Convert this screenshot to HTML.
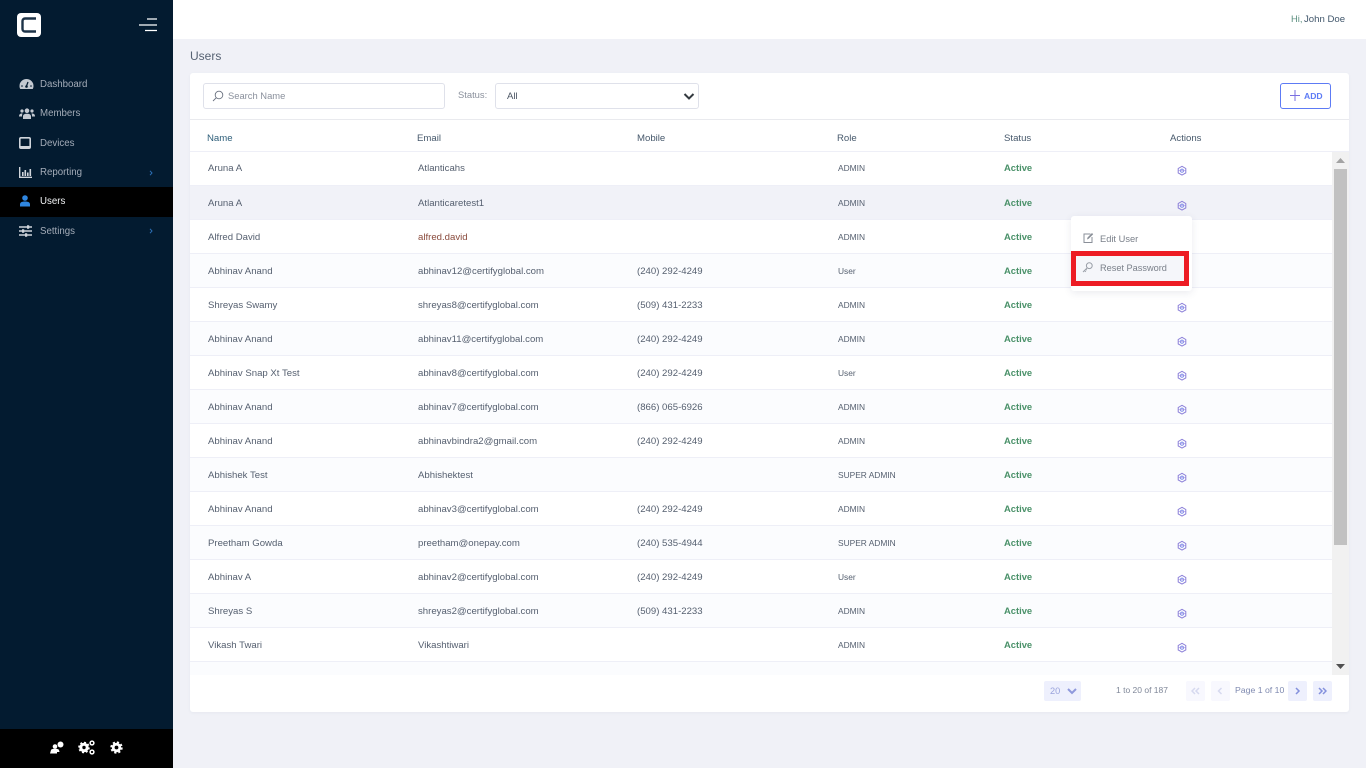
<!DOCTYPE html>
<html lang="en"><head><meta charset="utf-8"><title>Users</title>
<style>
*{box-sizing:border-box}
html,body{margin:0;padding:0;width:1366px;height:768px;overflow:hidden;background:#f0f1f7;font-family:"Liberation Sans",sans-serif;font-size:9.6px;color:#4a5568}
.a{position:absolute;white-space:nowrap}
#side{position:absolute;left:0;top:0;width:173px;height:768px;background:#031b30}
#side .t{position:absolute;left:40px;font-size:9.7px;line-height:14px;color:#a4acb8}
#side svg{position:absolute}
.r{position:absolute;left:190px;width:1142px;height:34px;border-bottom:1px solid #eeeff7}
.r.o{background:#fbfcfe}
.r span{position:absolute;top:0;line-height:35px;white-space:nowrap;color:#566070}
.n{left:18px}.e{left:228px}.m{left:447px}.l{left:648px;font-size:8.4px}
.r .s{left:814px;font-weight:bold;color:#4a9169;font-size:9.4px;line-height:33px}
.r svg{position:absolute;left:987px;top:14px}
.th{position:absolute;top:132px;line-height:14px;font-size:9.6px;color:#47596c}
.b{position:absolute;top:681px;width:19px;height:20px;border-radius:2px;background:#eef0fd}
.b svg{position:absolute;left:5px;top:6px}
</style></head><body>
<svg width="0" height="0" style="position:absolute"><defs>
<g id="g"><path d="M5 .8 8.800 3v4.400L5 9.600 1.200 7.400V3z" fill="none" stroke="#8b7fd8" stroke-width="1"/><circle cx="5" cy="5.200" r="1.600" fill="none" stroke="#7d8bea" stroke-width="1"/><path d="M1.500 5.200h7" stroke="#a79be6" stroke-width=".7"/></g>
</defs></svg>

<div class="a" style="left:173px;top:0;width:1193px;height:39px;background:#fff"></div>
<div class="a" style="left:1291px;top:12px;line-height:14px;font-size:9.400px;color:#5d9080">Hi,</div>
<div class="a" style="left:1304px;top:12px;line-height:15px;font-size:9.600px;color:#40566b">John Doe</div>

<div id="side">
<svg style="left:17px;top:13px" width="24" height="24" viewBox="0 0 24 24"><rect width="24" height="24" rx="4" fill="#fff"/><path d="M19 5.500H8A2.500 2.500 0 0 0 5.500 8v8A2.500 2.500 0 0 0 8 18.500h11" fill="none" stroke="#1d3348" stroke-width="2.400"/></svg>
<svg style="left:139px;top:18px" width="18" height="14" viewBox="0 0 18 14"><path d="M8 1h10M0 7h18M6 12.500h12" stroke="#fff" stroke-width="1.300"/></svg>

<svg style="left:19px;top:78px" width="15" height="12" viewBox="0 0 15 12"><path d="M7.500 1A7 7 0 0 0 .5 8c0 1.300.3 2.300.8 3h12.400c.5-.7.800-1.700.800-3a7 7 0 0 0-7-7z" fill="#c3c9d1"/><path d="M7.500 8 9 4" stroke="#031b30" stroke-width="1.300"/><circle cx="7.500" cy="8.500" r="1.300" fill="#031b30"/><circle cx="3" cy="8" r=".8" fill="#031b30"/><circle cx="12" cy="8" r=".8" fill="#031b30"/></svg>
<div class="t" style="top:78px">Dashboard</div>
<svg style="left:19px;top:108px" width="16" height="11" viewBox="0 0 16 11"><g fill="#c3c9d1"><circle cx="8" cy="2.700" r="2.300"/><circle cx="3" cy="3" r="1.600"/><circle cx="13" cy="3" r="1.600"/><path d="M4 11V8.500C4 6.500 5.500 5.700 8 5.700s4 .8 4 2.800V11zM0 8.500C0 6.500 1 5.500 3 5.500l.6.100C3 6.300 3 7.500 3 8.500zM16 8.500c0-2-1-3-3-3l-.6.100c.6.700.6 1.900.6 2.900z"/></g></svg>
<div class="t" style="top:107px">Members</div>
<svg style="left:19px;top:137px" width="12" height="12" viewBox="0 0 12 12"><rect x=".8" y=".8" width="10.400" height="10.400" rx="1.200" fill="none" stroke="#d0d5db" stroke-width="1.600"/><rect x="1" y="9" width="10" height="2.300" fill="#d0d5db"/></svg>
<div class="t" style="top:137px">Devices</div>
<svg style="left:19px;top:167px" width="13" height="11" viewBox="0 0 13 11"><path d="M.7 0v10.300H13" fill="none" stroke="#d0d5db" stroke-width="1.400"/><path d="M3 5h1.600v4H3zM5.500 3h1.600v6H5.500zM8 5.500h1.600V9H8zM10.500 2h1.600v7h-1.600z" fill="#d0d5db"/></svg>
<div class="t" style="top:166px">Reporting</div>
<svg style="left:149px;top:170px" width="4" height="6" viewBox="0 0 4 6"><path d="M1 .8 3 3 1 5.200" fill="none" stroke="#2c6fb5" stroke-width="1"/></svg>
<div class="a" style="left:0;top:187px;width:173px;height:30px;background:#000"></div>
<svg style="left:20px;top:195px" width="10" height="12" viewBox="0 0 10 12"><circle cx="5" cy="3" r="2.800" fill="#2f86e0"/><path d="M0 11.500V9.500C0 7.500 1.500 6.500 5 6.500s5 1 5 3v2z" fill="#2f86e0"/></svg>
<div class="t" style="top:195px;color:#f2f4f6">Users</div>
<svg style="left:19px;top:225px" width="13" height="12" viewBox="0 0 13 12"><path d="M0 2h13M0 6h13M0 10h13" stroke="#d0d5db" stroke-width="1.500"/><path d="M8 .3h2.200v3.400H8zM3 4.300h2.200v3.400H3zM6 8.300h2.200v3.400H6z" fill="#d0d5db"/></svg>
<div class="t" style="top:225px">Settings</div>
<svg style="left:149px;top:228px" width="4" height="6" viewBox="0 0 4 6"><path d="M1 .8 3 3 1 5.200" fill="none" stroke="#2c6fb5" stroke-width="1"/></svg>

<div class="a" style="left:0;top:729px;width:173px;height:39px;background:#000"></div>
<svg style="left:50px;top:741px" width="14" height="13" viewBox="0 0 14 13"><g fill="#fff"><circle cx="10.500" cy="3.500" r="3"/><circle cx="5" cy="5.500" r="2.300"/><path d="M0 12.500 1 9c.4-.8 1.500-1.300 4-1.300S8.600 8.200 9 9l.5 2H7v1.500z"/></g></svg>
<svg style="left:78px;top:740px" width="17" height="15" viewBox="0 0 17 15"><g fill="none" stroke="#fff"><circle cx="6" cy="7.500" r="3.200" stroke-width="3"/><circle cx="6" cy="7.500" r="5" stroke-width="1.600" stroke-dasharray="2 1.900"/><circle cx="14" cy="3" r="1.900" stroke-width="1.500"/><circle cx="14" cy="12" r="1.900" stroke-width="1.500"/></g></svg>
<svg style="left:110px;top:741px" width="13" height="13" viewBox="0 0 13 13"><g fill="none" stroke="#fff"><circle cx="6.500" cy="6.500" r="3.300" stroke-width="2.800"/><circle cx="6.500" cy="6.500" r="5.300" stroke-width="1.800" stroke-dasharray="2.200 2"/></g></svg>
</div>

<div class="a" style="left:190px;top:49px;line-height:14px;font-size:12px;color:#566273">Users</div>

<div class="a" style="left:190px;top:73px;width:1159px;height:639px;background:#fff;border-radius:3px;box-shadow:0 1px 3px rgba(40,50,90,.05)"></div>
<div class="a" style="left:190px;top:119px;width:1159px;height:1px;background:#e9eaee"></div>

<div class="a" style="left:203px;top:83px;width:242px;height:26px;border:1px solid #dfe1ea;border-radius:3px;background:#fff"></div>
<svg class="a" style="left:212px;top:90px" width="12" height="12" viewBox="0 0 12 12"><circle cx="7" cy="5" r="3.800" fill="none" stroke="#6b7280" stroke-width=".9"/><path d="M4.200 7.800 1 11" stroke="#6b7280" stroke-width=".9"/></svg>
<div class="a" style="left:228px;top:89px;line-height:14px;font-size:9.400px;color:#8a909c">Search Name</div>
<div class="a" style="left:458px;top:88px;line-height:14px;font-size:9.400px;color:#8a909c">Status:</div>
<div class="a" style="left:495px;top:83px;width:204px;height:26px;border:1px solid #dfe1ea;border-radius:3px;background:#fff"></div>
<div class="a" style="left:507px;top:90px;line-height:14px;font-size:9.600px;color:#4b5563">All</div>
<svg class="a" style="left:683px;top:93px" width="12" height="7" viewBox="0 0 12 7"><path d="M1.500 1 6 5.500 10.500 1" fill="none" stroke="#343a40" stroke-width="2"/></svg>
<div class="a" style="left:1280px;top:83px;width:51px;height:26px;border:1.300px solid #5d7bf5;border-radius:3px;background:#fff"></div>
<svg class="a" style="left:1290px;top:90px" width="10" height="11" viewBox="0 0 10 11"><path d="M5 0v11M0 5.500h10" stroke="#7a6fe0" stroke-width="1"/></svg>
<div class="a" style="left:1304px;top:89px;line-height:14px;font-size:8.600px;font-weight:bold;color:#5d7bf5">ADD</div>

<div class="th" style="left:207px;color:#2f5f7a">Name</div>
<div class="th" style="left:417px">Email</div>
<div class="th" style="left:637px">Mobile</div>
<div class="th" style="left:837px">Role</div>
<div class="th" style="left:1004px">Status</div>
<div class="th" style="left:1170px">Actions</div>
<div class="a" style="left:190px;top:151px;width:1159px;height:1px;background:#eeeff7"></div>

<div class="r" style="top:151px;height:35px"><span class="n">Aruna A</span><span class="e">Atlanticahs</span><span class="l">ADMIN</span><span class="s">Active</span><svg width="10" height="11" viewBox="0 0 10 10"><use href="#g"/></svg></div>
<div class="r" style="top:186px;background:#f1f2f8"><span class="n">Aruna A</span><span class="e">Atlanticaretest1</span><span class="l">ADMIN</span><span class="s">Active</span><svg width="10" height="11" viewBox="0 0 10 10"><use href="#g"/></svg></div>
<div class="r" style="top:220px"><span class="n">Alfred David</span><span class="e" style="color:#8a4b3d">alfred.david</span><span class="l">ADMIN</span><span class="s">Active</span></div>
<div class="r o" style="top:254px"><span class="n">Abhinav Anand</span><span class="e">abhinav12@certifyglobal.com</span><span class="m">(240) 292-4249</span><span class="l">User</span><span class="s">Active</span></div>
<div class="r" style="top:288px"><span class="n">Shreyas Swamy</span><span class="e">shreyas8@certifyglobal.com</span><span class="m">(509) 431-2233</span><span class="l">ADMIN</span><span class="s">Active</span><svg width="10" height="11" viewBox="0 0 10 10"><use href="#g"/></svg></div>
<div class="r o" style="top:322px"><span class="n">Abhinav Anand</span><span class="e">abhinav11@certifyglobal.com</span><span class="m">(240) 292-4249</span><span class="l">ADMIN</span><span class="s">Active</span><svg width="10" height="11" viewBox="0 0 10 10"><use href="#g"/></svg></div>
<div class="r" style="top:356px"><span class="n">Abhinav Snap Xt Test</span><span class="e">abhinav8@certifyglobal.com</span><span class="m">(240) 292-4249</span><span class="l">User</span><span class="s">Active</span><svg width="10" height="11" viewBox="0 0 10 10"><use href="#g"/></svg></div>
<div class="r o" style="top:390px"><span class="n">Abhinav Anand</span><span class="e">abhinav7@certifyglobal.com</span><span class="m">(866) 065-6926</span><span class="l">ADMIN</span><span class="s">Active</span><svg width="10" height="11" viewBox="0 0 10 10"><use href="#g"/></svg></div>
<div class="r" style="top:424px"><span class="n">Abhinav Anand</span><span class="e">abhinavbindra2@gmail.com</span><span class="m">(240) 292-4249</span><span class="l">ADMIN</span><span class="s">Active</span><svg width="10" height="11" viewBox="0 0 10 10"><use href="#g"/></svg></div>
<div class="r o" style="top:458px"><span class="n">Abhishek Test</span><span class="e">Abhishektest</span><span class="l">SUPER ADMIN</span><span class="s">Active</span><svg width="10" height="11" viewBox="0 0 10 10"><use href="#g"/></svg></div>
<div class="r" style="top:492px"><span class="n">Abhinav Anand</span><span class="e">abhinav3@certifyglobal.com</span><span class="m">(240) 292-4249</span><span class="l">ADMIN</span><span class="s">Active</span><svg width="10" height="11" viewBox="0 0 10 10"><use href="#g"/></svg></div>
<div class="r o" style="top:526px"><span class="n">Preetham Gowda</span><span class="e">preetham@onepay.com</span><span class="m">(240) 535-4944</span><span class="l">SUPER ADMIN</span><span class="s">Active</span><svg width="10" height="11" viewBox="0 0 10 10"><use href="#g"/></svg></div>
<div class="r" style="top:560px"><span class="n">Abhinav A</span><span class="e">abhinav2@certifyglobal.com</span><span class="m">(240) 292-4249</span><span class="l">User</span><span class="s">Active</span><svg width="10" height="11" viewBox="0 0 10 10"><use href="#g"/></svg></div>
<div class="r o" style="top:594px"><span class="n">Shreyas S</span><span class="e">shreyas2@certifyglobal.com</span><span class="m">(509) 431-2233</span><span class="l">ADMIN</span><span class="s">Active</span><svg width="10" height="11" viewBox="0 0 10 10"><use href="#g"/></svg></div>
<div class="r" style="top:628px"><span class="n">Vikash Twari</span><span class="e">Vikashtiwari</span><span class="l">ADMIN</span><span class="s">Active</span><svg width="10" height="11" viewBox="0 0 10 10"><use href="#g"/></svg></div>
<div class="a" style="left:190px;top:662px;width:1142px;height:13px;background:#fbfcfe"></div>

<div class="a" style="left:1332px;top:152px;width:17px;height:523px;background:#f1f1f1"></div>
<div class="a" style="left:1334px;top:169px;width:13px;height:376px;background:#c1c1c1"></div>
<svg class="a" style="left:1336px;top:158px" width="9" height="5" viewBox="0 0 9 5"><path d="M4.500 0 9 5H0z" fill="#a3a3a3"/></svg>
<svg class="a" style="left:1336px;top:664px" width="9" height="5" viewBox="0 0 9 5"><path d="M0 0h9L4.500 5z" fill="#505050"/></svg>

<div class="a" style="left:1071px;top:216px;width:121px;height:75px;background:#fff;border-radius:3px;box-shadow:0 2px 8px rgba(50,60,100,.1)"></div>
<svg class="a" style="left:1083px;top:232px" width="11" height="11" viewBox="0 0 11 11"><path d="M7.500 2H1v8.500h8V5" fill="none" stroke="#8a8f98" stroke-width="1"/><path d="M4 7.500 4.500 5.500 9 1l1.200 1.200-4.500 4.500z" fill="#8a8f98"/></svg>
<div class="a" style="left:1100px;top:232px;line-height:14px;font-size:9.300px;color:#7a808a">Edit User</div>
<div class="a" style="left:1071px;top:251px;width:118px;height:35px;border:5px solid #ed1c24;background:#f5f6fa"></div>
<svg class="a" style="left:1082px;top:262px" width="11" height="11" viewBox="0 0 11 11"><circle cx="7.300" cy="3.700" r="2.900" fill="none" stroke="#9a9fa8" stroke-width="1"/><path d="M5.200 5.800 1 10M2.500 8.500l1.300 1.300M3.800 7.200l1 1" fill="none" stroke="#9a9fa8" stroke-width="1"/></svg>
<div class="a" style="left:1100px;top:261px;line-height:14px;font-size:9.200px;color:#7a808a">Reset Password</div>

<div class="a" style="left:1044px;top:681px;width:37px;height:20px;background:#eef0fd;border-radius:2px"></div>
<div class="a" style="left:1050px;top:684px;line-height:14px;font-size:9.200px;color:#9aa3dc">20</div>
<svg class="a" style="left:1067px;top:688px" width="10" height="7" viewBox="0 0 10 7"><path d="M1 1 5 5 9 1" fill="none" stroke="#8f99dc" stroke-width="2"/></svg>
<div class="a" style="left:1116px;top:683px;line-height:14px;font-size:8.500px;color:#7f8798">1 to 20 of 187</div>
<div class="b" style="left:1186px;background:#f8f8fe"><svg width="9" height="8" viewBox="0 0 9 8"><path d="M4 1 1 4l3 3M8 1 5 4l3 3" fill="none" stroke="#d6d9ef" stroke-width="1.500"/></svg></div>
<div class="b" style="left:1211px;background:#f8f8fe"><svg width="9" height="8" viewBox="0 0 9 8"><path d="M5.500 1 2.500 4l3 3" fill="none" stroke="#d6d9ef" stroke-width="1.500"/></svg></div>
<div class="a" style="left:1235px;top:683px;line-height:14px;font-size:8.700px;color:#7f8ab0">Page 1 of 10</div>
<div class="b" style="left:1288px"><svg width="9" height="8" viewBox="0 0 9 8"><path d="M3 1l3 3-3 3" fill="none" stroke="#8491dd" stroke-width="1.500"/></svg></div>
<div class="b" style="left:1313px"><svg width="9" height="8" viewBox="0 0 9 8"><path d="M1 1l3 3-3 3M5 1l3 3-3 3" fill="none" stroke="#8491dd" stroke-width="1.500"/></svg></div>
</body></html>
